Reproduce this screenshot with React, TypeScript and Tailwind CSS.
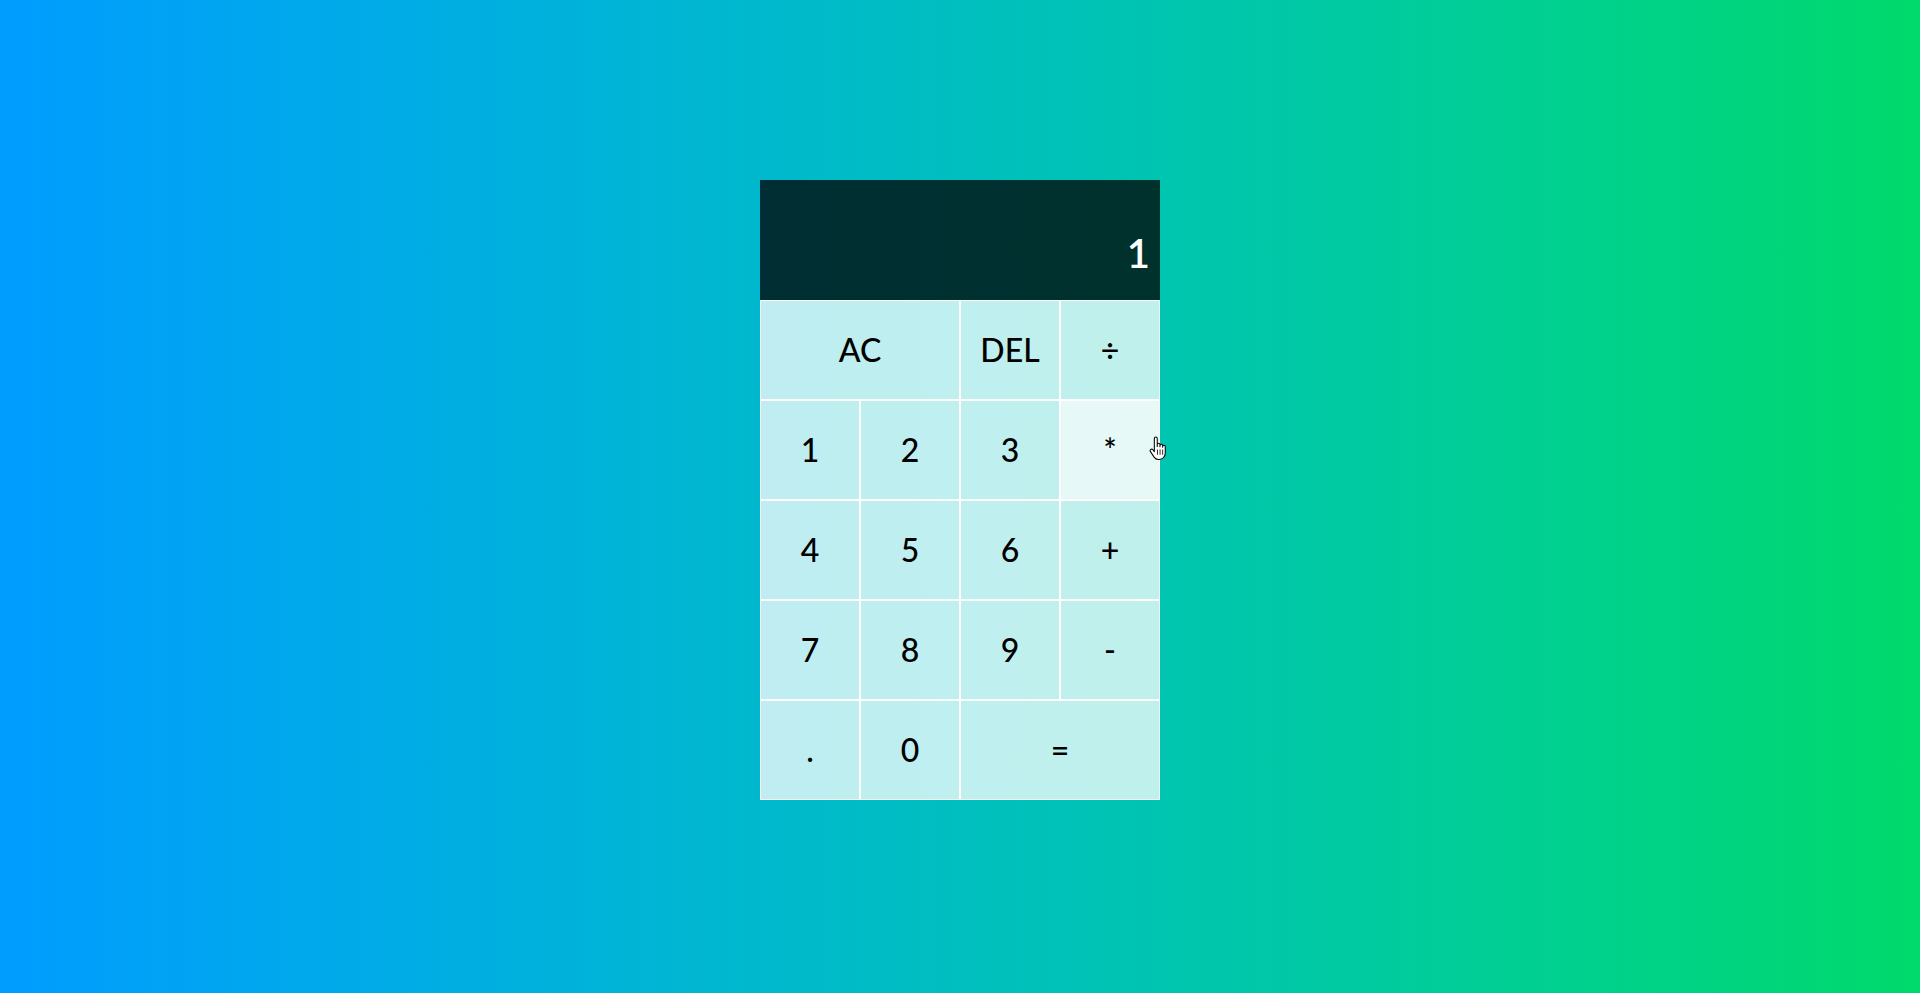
import React, { useState } from 'react';

type Key = { label: string; span?: boolean; hover?: boolean };

const keys: Key[] = [
  { label: 'AC', span: true },
  { label: 'DEL' },
  { label: '÷' },
  { label: '1' },
  { label: '2' },
  { label: '3' },
  { label: '*', hover: true },
  { label: '4' },
  { label: '5' },
  { label: '6' },
  { label: '+' },
  { label: '7' },
  { label: '8' },
  { label: '9' },
  { label: '-' },
  { label: '.' },
  { label: '0' },
  { label: '=', span: true },
];

const HandCursor: React.FC = () => (
  <svg className="absolute left-[389px] top-[256px] pointer-events-none" width="19" height="25" viewBox="0 0 18 24">
    <path
      d="M5 2.5c0-.9.6-1.5 1.4-1.5s1.4.6 1.4 1.5V10V8.2c0-.8.6-1.3 1.3-1.3s1.3.5 1.3 1.3v2V9.3c0-.8.6-1.3 1.3-1.3s1.3.5 1.3 1.3v1.5-.6c0-.8.6-1.3 1.3-1.3s1.2.5 1.2 1.3v6c0 3.5-2.3 6.3-5.8 6.3H8.8c-1.8 0-3-.8-4-2.2L1.3 15c-.5-.7-.4-1.6.3-2.1s1.5-.3 2 .3L5 15V2.5z"
      fill="#fff"
      stroke="#000"
      strokeWidth="1"
      strokeLinejoin="round"
    />
    <path d="M8 13v5M10.5 13v5M13 13v5" stroke="#000" strokeWidth="0.8" />
  </svg>
);

export default function App() {
  const [current] = useState('1');
  const [previous] = useState('');

  return (
    <div className="w-full bg-black" style={{ fontFamily: 'Lato, "Open Sans", sans-serif' }}>
      <div className="h-[993px] w-full bg-gradient-to-r from-[#009cff] to-[#00d96b] flex justify-center pt-[180px]">
        <div className="relative grid grid-cols-[repeat(4,100px)] grid-rows-[120px_repeat(5,100px)] h-[620px]">
          <div className="col-span-4 bg-black/75 flex flex-col items-end justify-around p-[10px] break-all">
            <div className="text-white/75 text-[1.5rem]">{previous}</div>
            <div className="text-white text-[2.5rem] font-semibold leading-[1.2]">{current}</div>
          </div>
          {keys.map((k) => (
            <button
              key={k.label}
              className={`${k.span ? 'col-span-2' : ''} ${
                k.hover ? 'bg-white/90' : 'bg-white/75'
              } border border-white text-[2rem] font-medium text-black outline-none flex items-center justify-center`}
            >
              {k.label}
            </button>
          ))}
          <HandCursor />
        </div>
      </div>
    </div>
  );
}
